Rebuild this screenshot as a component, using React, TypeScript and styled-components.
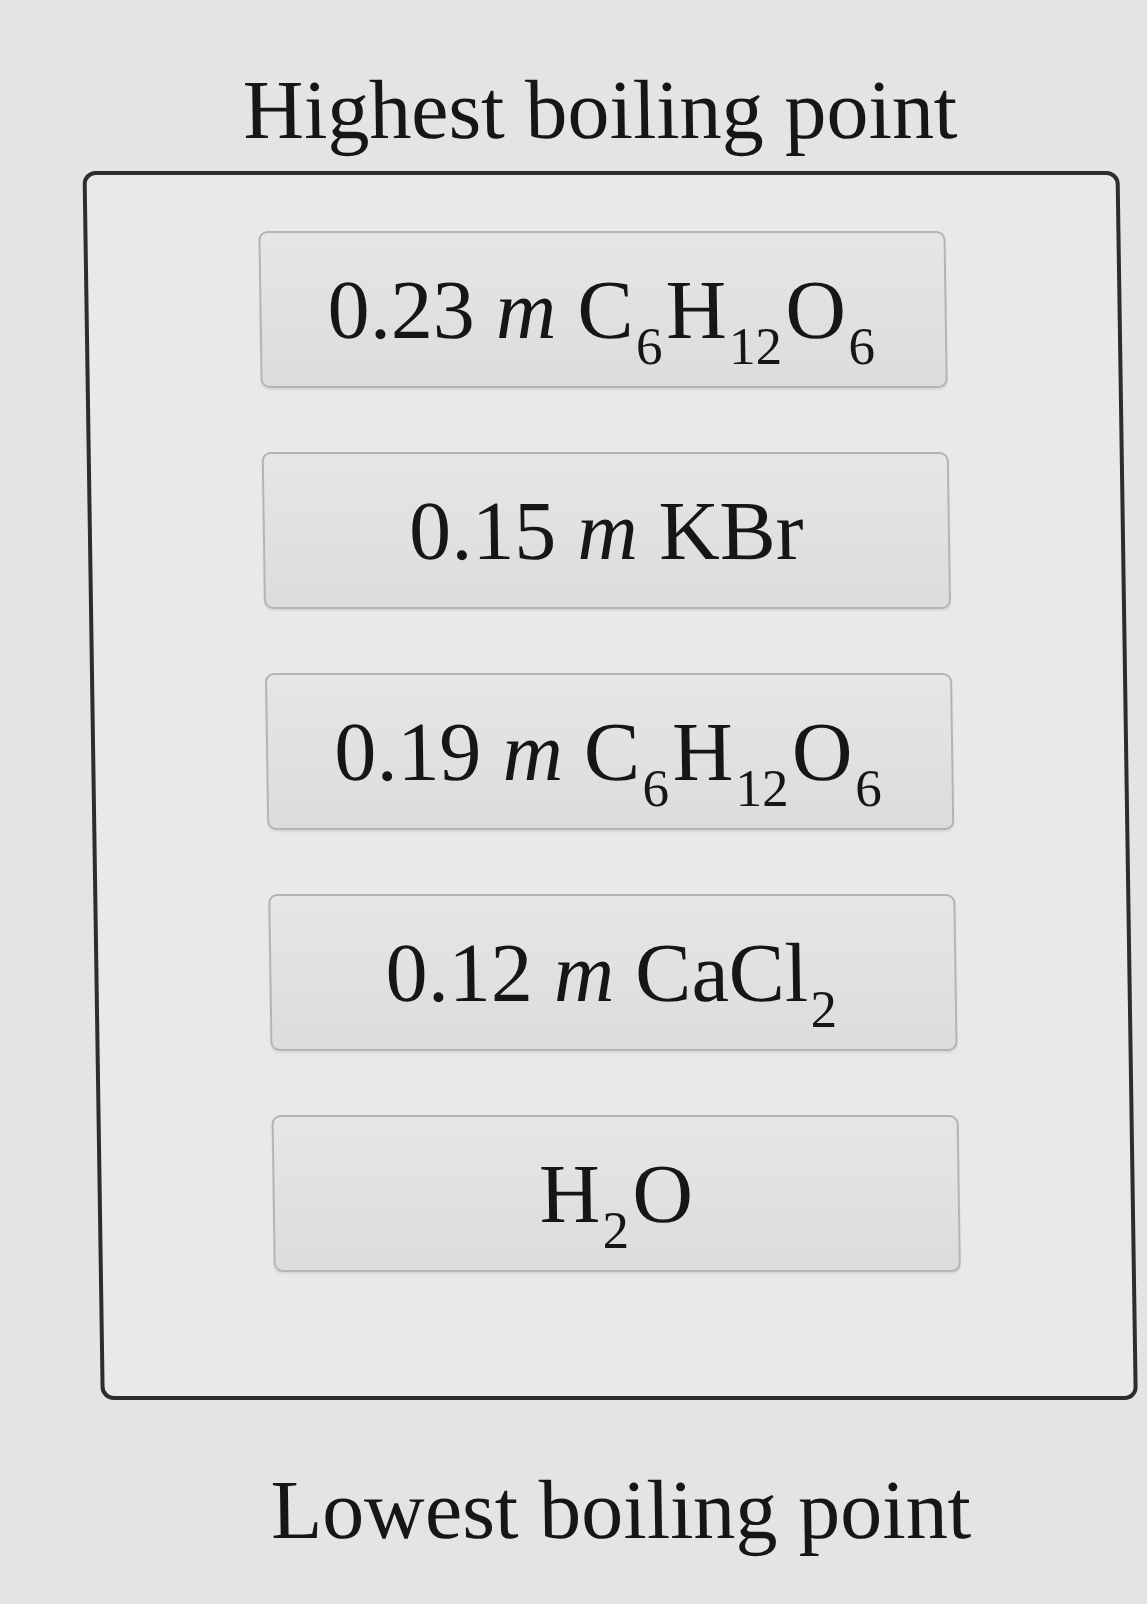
import React from 'react';
import styled, { createGlobalStyle } from 'styled-components';

const GlobalStyle = createGlobalStyle`
  html, body {
    margin: 0;
    padding: 0;
    background: #e3e3e3;
  }
`;

type Part = { text: string; italic?: boolean; sub?: boolean };

const options: Part[][] = [
  [
    { text: '0.23 ' },
    { text: 'm', italic: true },
    { text: ' C' },
    { text: '6', sub: true },
    { text: 'H' },
    { text: '12', sub: true },
    { text: 'O' },
    { text: '6', sub: true },
  ],
  [{ text: '0.15 ' }, { text: 'm', italic: true }, { text: ' KBr' }],
  [
    { text: '0.19 ' },
    { text: 'm', italic: true },
    { text: ' C' },
    { text: '6', sub: true },
    { text: 'H' },
    { text: '12', sub: true },
    { text: 'O' },
    { text: '6', sub: true },
  ],
  [{ text: '0.12 ' }, { text: 'm', italic: true }, { text: ' CaCl' }, { text: '2', sub: true }],
  [{ text: 'H' }, { text: '2', sub: true }, { text: 'O' }],
];

const App = () => {
  return (
    <>
      <GlobalStyle />
      <Page>
        <Column>
          <Label>Highest boiling point</Label>
          <Panel>
            {options.map((parts, i) => (
              <Option key={i}>
                <Formula>
                  {parts.map((p, j) =>
                    p.sub ? (
                      <Sub key={j}>{p.text}</Sub>
                    ) : p.italic ? (
                      <Em key={j}>{p.text}</Em>
                    ) : (
                      <React.Fragment key={j}>{p.text}</React.Fragment>
                    )
                  )}
                </Formula>
              </Option>
            ))}
          </Panel>
          <Label $bottom>Lowest boiling point</Label>
        </Column>
      </Page>
    </>
  );
};

export default App;

const Page = styled.div`
  width: 1147px;
  height: 1604px;
  overflow: hidden;
  padding-top: 68px;
  box-sizing: border-box;
  background: #e4e4e4;
  font-family: 'Liberation Serif', 'Times New Roman', serif;
  color: #161616;
`;

const Column = styled.div`
  width: 1037px;
  margin-left: 81px;
  display: flex;
  flex-direction: column;
  align-items: center;
  transform: skewX(0.85deg);
  transform-origin: left top;
`;

const Label = styled.div<{ $bottom?: boolean }>`
  font-size: 84px;
  line-height: 1;
  white-space: nowrap;
  margin-top: ${(p) => (p.$bottom ? '68px' : '0')};
  margin-bottom: ${(p) => (p.$bottom ? '0' : '19px')};
`;

const Panel = styled.div`
  width: 100%;
  box-sizing: border-box;
  border: 4px solid #2c2d31;
  border-radius: 13px;
  background: #e9e9e9;
  padding: 56px 0 124px;
  display: flex;
  flex-direction: column;
  align-items: center;
  gap: 64px;
`;

const Option = styled.div`
  width: 687px;
  height: 157px;
  box-sizing: border-box;
  border: 2px solid #b4b4b4;
  border-radius: 9px;
  background: linear-gradient(#e6e6e6, #dcdcdc);
  box-shadow: 0 2px 2px rgba(0, 0, 0, 0.08);
  display: flex;
  align-items: center;
  justify-content: center;
`;

const Formula = styled.span`
  font-size: 84px;
  line-height: 1;
  white-space: pre;
`;

const Em = styled.i`
  font-style: italic;
`;

const Sub = styled.sub`
  font-size: 0.63em;
  line-height: 0;
  vertical-align: -0.5em;
  padding: 0 4px 0 2px;
`;
